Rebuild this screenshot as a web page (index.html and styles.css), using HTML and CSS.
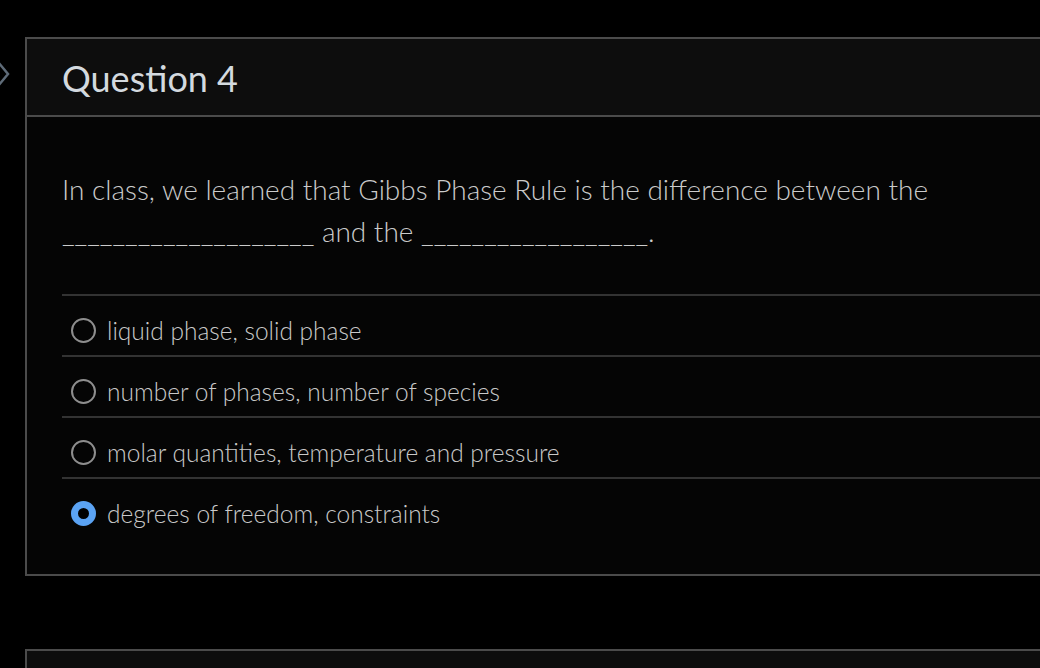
FILE: index.html
```html
<!DOCTYPE html>
<html lang="en">
<head>
    <meta charset="UTF-8">
    <meta name="viewport" content="width=device-width, initial-scale=1.0">
    <title>Question 4</title>
    <link rel="stylesheet" href="styles.css">
</head>
<body>
    <div class="page">
        <svg class="nav-prev" width="14" height="30" viewBox="0 0 14 30" aria-hidden="true">
            <path d="M2 3 L12 15 L2 27" fill="none" stroke="#5e6b78" stroke-width="2.5"/>
        </svg>
        <section class="question">
            <div class="question__header">
                <h2>Question 4</h2>
            </div>
            <div class="question__body">
                <p class="question__text">
                    In class, we learned that Gibbs Phase Rule is the difference between the
                    ____________________ and the __________________.
                </p>
                <ul class="answers">
                    <li class="answer"><span class="radio"></span>liquid phase, solid phase</li>
                    <li class="answer"><span class="radio"></span>number of phases, number of species</li>
                    <li class="answer"><span class="radio"></span>molar quantities, temperature and pressure</li>
                    <li class="answer"><span class="radio radio--checked"></span>degrees of freedom, constraints</li>
                </ul>
            </div>
        </section>
        <section class="question question--next">
            <div class="question__header"></div>
        </section>
    </div>
</body>
</html>
```

FILE: styles.css
```css
html, body {
  margin: 0;
  background: #000;
  overflow: hidden;
}

body {
  font-family: Lato, "Open Sans", sans-serif;
  color: #c9c9c9;
  height: 668px;
}

.page {
  position: relative;
  padding-top: 37px;
}

.nav-prev {
  position: absolute;
  left: -4px;
  top: 59px;
}

.question {
  margin-left: 25px;
  width: 1100px;
  border: 2px solid #4b4b4b;
  background: #050505;
}

.question__header {
  height: 76px;
  display: flex;
  align-items: center;
  padding-left: 35px;
  background: #0d0d0d;
  border-bottom: 2px solid #4b4b4b;
}

.question__header h2 {
  margin: 0;
  font-size: 36px;
  font-weight: 400;
  color: #d3d9df;
  padding-top: 2px;
}

.question__body {
  padding: 51px 0 36px 35px;
}

.question__text {
  margin: 0;
  width: 960px;
  font-size: 28px;
  line-height: 42px;
  font-weight: 300;
  color: #cbcbcb;
}

.answers {
  list-style: none;
  margin: 42px 0 0;
  padding: 0;
}

.answer {
  display: flex;
  align-items: center;
  gap: 11px;
  padding: 22px 0 12px 8px;
  border-top: 2px solid #333;
  font-size: 24.5px;
  font-weight: 300;
  color: #c9c9c9;
  line-height: 25px;
}

.radio {
  width: 25px;
  height: 25px;
  margin-left: 1px;
  box-sizing: border-box;
  border: 2.5px solid #8e8e8e;
  border-radius: 50%;
  flex: none;
}

.radio--checked {
  border: 7.5px solid #5ba3f3;
  background: #000;
}

.question--next {
  margin-top: 73px;
}
```
